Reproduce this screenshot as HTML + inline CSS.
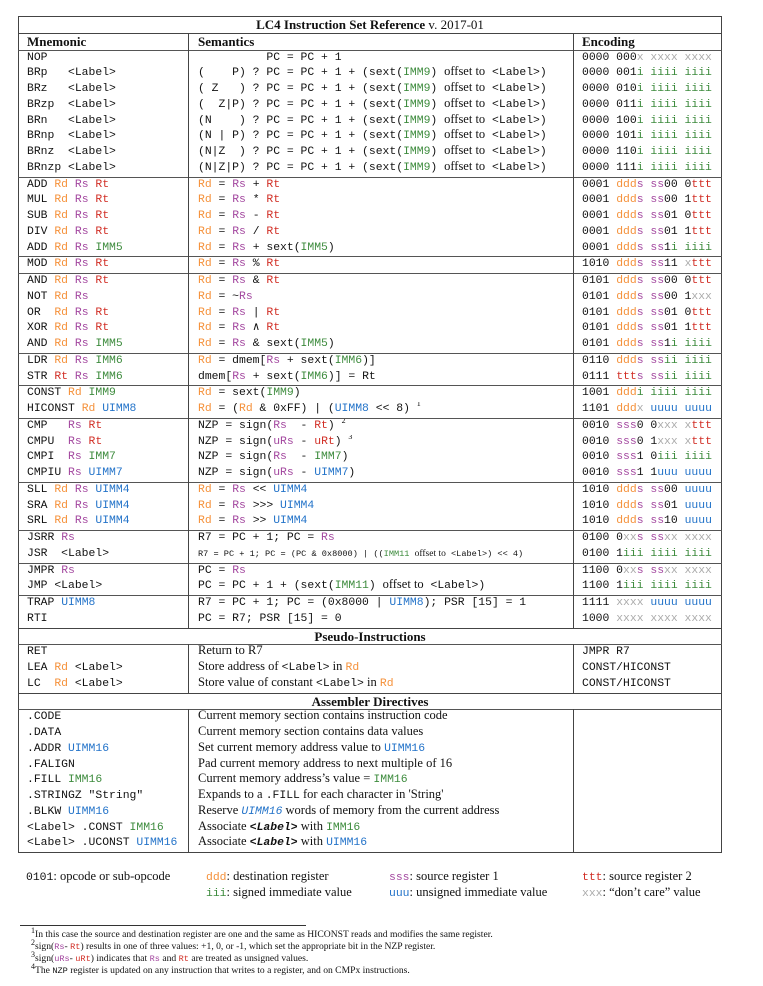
<!DOCTYPE html>
<html><head><meta charset="utf-8"><style>
body{margin:0;background:#fff;width:763px;height:986px;position:relative;overflow:hidden;color:#111;}
table{position:absolute;left:18px;top:16px;border-collapse:collapse;table-layout:fixed;border:1px solid #444;}
td{padding:0;height:15.75px;line-height:15.75px;font-family:"Liberation Mono",monospace;font-size:11.4px;white-space:pre;overflow:hidden;vertical-align:middle;}
td>div{height:15.75px;overflow:hidden;}
td.c1{width:161px;padding-left:8px;border-right:1px solid #444;}
td.c2{width:375px;padding-left:9px;border-right:1px solid #444;}
td.c3{width:139px;padding-left:8px;}
tr.g td{border-top:1px solid #555;}
.h td{font-family:"Liberation Serif",serif;font-weight:bold;font-size:13px;border-top:1px solid #444;}
.t td{font-family:"Liberation Serif",serif;font-weight:bold;font-size:13px;text-align:center;border-top:1px solid #444;}
.sf{font-family:"Liberation Serif",serif;font-size:12.5px;line-height:0;}
i,b{line-height:0;}
.d{color:#f5913a}.s{color:#a3479f}.t1{color:#d12e25}.i{color:#3d8b3d}.u{color:#2373c9}.x{color:#aaa}
sup{font-family:"Liberation Serif",serif;font-size:8px;line-height:0;}
.sm{font-size:8.6px;line-height:0;}
.leg{position:absolute;font-family:"Liberation Serif",serif;font-size:12.5px;white-space:pre;line-height:16px;}
.leg span.m{font-family:"Liberation Mono",monospace;font-size:11.4px;}
.fn{position:absolute;left:31px;font-family:"Liberation Serif",serif;font-size:9.6px;white-space:pre;line-height:12px;}
.fn .m{font-family:"Liberation Mono",monospace;font-size:8.6px;}
</style></head><body>
<table>
<tr class="t"><td colspan="3"><div>LC4 Instruction Set Reference <span style="font-weight:normal">v. 2017-01</span></div></td></tr>
<tr class="h"><td class="c1"><div>Mnemonic</div></td><td class="c2"><div>Semantics</div></td><td class="c3"><div>Encoding</div></td></tr>
<tr class="g"><td class="c1"><div>NOP</div></td><td class="c2"><div>          PC = PC + 1</div></td><td class="c3"><div>0000 000<span class="x">x xxxx xxxx</span></div></td></tr>
<tr><td class="c1"><div>BRp   &lt;Label&gt;</div></td><td class="c2"><div>(    P) ? PC = PC + 1 + (sext(<span class="i">IMM9</span>) <span class="sf">offset to</span> &lt;Label&gt;)</div></td><td class="c3"><div>0000 001<span class="i">i iiii iiii</span></div></td></tr>
<tr><td class="c1"><div>BRz   &lt;Label&gt;</div></td><td class="c2"><div>( Z   ) ? PC = PC + 1 + (sext(<span class="i">IMM9</span>) <span class="sf">offset to</span> &lt;Label&gt;)</div></td><td class="c3"><div>0000 010<span class="i">i iiii iiii</span></div></td></tr>
<tr><td class="c1"><div>BRzp  &lt;Label&gt;</div></td><td class="c2"><div>(  Z|P) ? PC = PC + 1 + (sext(<span class="i">IMM9</span>) <span class="sf">offset to</span> &lt;Label&gt;)</div></td><td class="c3"><div>0000 011<span class="i">i iiii iiii</span></div></td></tr>
<tr><td class="c1"><div>BRn   &lt;Label&gt;</div></td><td class="c2"><div>(N    ) ? PC = PC + 1 + (sext(<span class="i">IMM9</span>) <span class="sf">offset to</span> &lt;Label&gt;)</div></td><td class="c3"><div>0000 100<span class="i">i iiii iiii</span></div></td></tr>
<tr><td class="c1"><div>BRnp  &lt;Label&gt;</div></td><td class="c2"><div>(N | P) ? PC = PC + 1 + (sext(<span class="i">IMM9</span>) <span class="sf">offset to</span> &lt;Label&gt;)</div></td><td class="c3"><div>0000 101<span class="i">i iiii iiii</span></div></td></tr>
<tr><td class="c1"><div>BRnz  &lt;Label&gt;</div></td><td class="c2"><div>(N|Z  ) ? PC = PC + 1 + (sext(<span class="i">IMM9</span>) <span class="sf">offset to</span> &lt;Label&gt;)</div></td><td class="c3"><div>0000 110<span class="i">i iiii iiii</span></div></td></tr>
<tr><td class="c1"><div>BRnzp &lt;Label&gt;</div></td><td class="c2"><div>(N|Z|P) ? PC = PC + 1 + (sext(<span class="i">IMM9</span>) <span class="sf">offset to</span> &lt;Label&gt;)</div></td><td class="c3"><div>0000 111<span class="i">i iiii iiii</span></div></td></tr>

<tr class="g"><td class="c1"><div>ADD <span class="d">Rd</span> <span class="s">Rs</span> <span class="t1">Rt</span></div></td><td class="c2"><div><span class="d">Rd</span> = <span class="s">Rs</span> + <span class="t1">Rt</span></div></td><td class="c3"><div>0001 <span class="d">ddd</span><span class="s">s ss</span>00 0<span class="t1">ttt</span></div></td></tr>
<tr><td class="c1"><div>MUL <span class="d">Rd</span> <span class="s">Rs</span> <span class="t1">Rt</span></div></td><td class="c2"><div><span class="d">Rd</span> = <span class="s">Rs</span> * <span class="t1">Rt</span></div></td><td class="c3"><div>0001 <span class="d">ddd</span><span class="s">s ss</span>00 1<span class="t1">ttt</span></div></td></tr>
<tr><td class="c1"><div>SUB <span class="d">Rd</span> <span class="s">Rs</span> <span class="t1">Rt</span></div></td><td class="c2"><div><span class="d">Rd</span> = <span class="s">Rs</span> - <span class="t1">Rt</span></div></td><td class="c3"><div>0001 <span class="d">ddd</span><span class="s">s ss</span>01 0<span class="t1">ttt</span></div></td></tr>
<tr><td class="c1"><div>DIV <span class="d">Rd</span> <span class="s">Rs</span> <span class="t1">Rt</span></div></td><td class="c2"><div><span class="d">Rd</span> = <span class="s">Rs</span> / <span class="t1">Rt</span></div></td><td class="c3"><div>0001 <span class="d">ddd</span><span class="s">s ss</span>01 1<span class="t1">ttt</span></div></td></tr>
<tr><td class="c1"><div>ADD <span class="d">Rd</span> <span class="s">Rs</span> <span class="i">IMM5</span></div></td><td class="c2"><div><span class="d">Rd</span> = <span class="s">Rs</span> + sext(<span class="i">IMM5</span>)</div></td><td class="c3"><div>0001 <span class="d">ddd</span><span class="s">s ss</span>1<span class="i">i iiii</span></div></td></tr>

<tr class="g"><td class="c1"><div>MOD <span class="d">Rd</span> <span class="s">Rs</span> <span class="t1">Rt</span></div></td><td class="c2"><div><span class="d">Rd</span> = <span class="s">Rs</span> % <span class="t1">Rt</span></div></td><td class="c3"><div>1010 <span class="d">ddd</span><span class="s">s ss</span>11 <span class="x">x</span><span class="t1">ttt</span></div></td></tr>

<tr class="g"><td class="c1"><div>AND <span class="d">Rd</span> <span class="s">Rs</span> <span class="t1">Rt</span></div></td><td class="c2"><div><span class="d">Rd</span> = <span class="s">Rs</span> &amp; <span class="t1">Rt</span></div></td><td class="c3"><div>0101 <span class="d">ddd</span><span class="s">s ss</span>00 0<span class="t1">ttt</span></div></td></tr>
<tr><td class="c1"><div>NOT <span class="d">Rd</span> <span class="s">Rs</span></div></td><td class="c2"><div><span class="d">Rd</span> = ~<span class="s">Rs</span></div></td><td class="c3"><div>0101 <span class="d">ddd</span><span class="s">s ss</span>00 1<span class="x">xxx</span></div></td></tr>
<tr><td class="c1"><div>OR  <span class="d">Rd</span> <span class="s">Rs</span> <span class="t1">Rt</span></div></td><td class="c2"><div><span class="d">Rd</span> = <span class="s">Rs</span> | <span class="t1">Rt</span></div></td><td class="c3"><div>0101 <span class="d">ddd</span><span class="s">s ss</span>01 0<span class="t1">ttt</span></div></td></tr>
<tr><td class="c1"><div>XOR <span class="d">Rd</span> <span class="s">Rs</span> <span class="t1">Rt</span></div></td><td class="c2"><div><span class="d">Rd</span> = <span class="s">Rs</span> ∧ <span class="t1">Rt</span></div></td><td class="c3"><div>0101 <span class="d">ddd</span><span class="s">s ss</span>01 1<span class="t1">ttt</span></div></td></tr>
<tr><td class="c1"><div>AND <span class="d">Rd</span> <span class="s">Rs</span> <span class="i">IMM5</span></div></td><td class="c2"><div><span class="d">Rd</span> = <span class="s">Rs</span> &amp; sext(<span class="i">IMM5</span>)</div></td><td class="c3"><div>0101 <span class="d">ddd</span><span class="s">s ss</span>1<span class="i">i iiii</span></div></td></tr>

<tr class="g"><td class="c1"><div>LDR <span class="d">Rd</span> <span class="s">Rs</span> <span class="i">IMM6</span></div></td><td class="c2"><div><span class="d">Rd</span> = dmem[<span class="s">Rs</span> + sext(<span class="i">IMM6</span>)]</div></td><td class="c3"><div>0110 <span class="d">ddd</span><span class="s">s ss</span><span class="i">ii iiii</span></div></td></tr>
<tr><td class="c1"><div>STR <span class="t1">Rt</span> <span class="s">Rs</span> <span class="i">IMM6</span></div></td><td class="c2"><div>dmem[<span class="s">Rs</span> + sext(<span class="i">IMM6</span>)] = Rt</div></td><td class="c3"><div>0111 <span class="t1">ttt</span><span class="s">s ss</span><span class="i">ii iiii</span></div></td></tr>

<tr class="g"><td class="c1"><div>CONST <span class="d">Rd</span> <span class="i">IMM9</span></div></td><td class="c2"><div><span class="d">Rd</span> = sext(<span class="i">IMM9</span>)</div></td><td class="c3"><div>1001 <span class="d">ddd</span><span class="i">i iiii iiii</span></div></td></tr>
<tr><td class="c1"><div>HICONST <span class="d">Rd</span> <span class="u">UIMM8</span></div></td><td class="c2"><div><span class="d">Rd</span> = (<span class="d">Rd</span> &amp; 0xFF) | (<span class="u">UIMM8</span> &lt;&lt; 8) <sup>1</sup></div></td><td class="c3"><div>1101 <span class="d">ddd</span><span class="x">x</span> <span class="u">uuuu uuuu</span></div></td></tr>

<tr class="g"><td class="c1"><div>CMP   <span class="s">Rs</span> <span class="t1">Rt</span></div></td><td class="c2"><div>NZP = sign(<span class="s">Rs</span>  - <span class="t1">Rt</span>) <sup>2</sup></div></td><td class="c3"><div>0010 <span class="s">sss</span>0 0<span class="x">xxx x</span><span class="t1">ttt</span></div></td></tr>
<tr><td class="c1"><div>CMPU  <span class="s">Rs</span> <span class="t1">Rt</span></div></td><td class="c2"><div>NZP = sign(<span class="s">uRs</span> - <span class="t1">uRt</span>) <sup>3</sup></div></td><td class="c3"><div>0010 <span class="s">sss</span>0 1<span class="x">xxx x</span><span class="t1">ttt</span></div></td></tr>
<tr><td class="c1"><div>CMPI  <span class="s">Rs</span> <span class="i">IMM7</span></div></td><td class="c2"><div>NZP = sign(<span class="s">Rs</span>  - <span class="i">IMM7</span>)</div></td><td class="c3"><div>0010 <span class="s">sss</span>1 0<span class="i">iii iiii</span></div></td></tr>
<tr><td class="c1"><div>CMPIU <span class="s">Rs</span> <span class="u">UIMM7</span></div></td><td class="c2"><div>NZP = sign(<span class="s">uRs</span> - <span class="u">UIMM7</span>)</div></td><td class="c3"><div>0010 <span class="s">sss</span>1 1<span class="u">uuu uuuu</span></div></td></tr>

<tr class="g"><td class="c1"><div>SLL <span class="d">Rd</span> <span class="s">Rs</span> <span class="u">UIMM4</span></div></td><td class="c2"><div><span class="d">Rd</span> = <span class="s">Rs</span> &lt;&lt; <span class="u">UIMM4</span></div></td><td class="c3"><div>1010 <span class="d">ddd</span><span class="s">s ss</span>00 <span class="u">uuuu</span></div></td></tr>
<tr><td class="c1"><div>SRA <span class="d">Rd</span> <span class="s">Rs</span> <span class="u">UIMM4</span></div></td><td class="c2"><div><span class="d">Rd</span> = <span class="s">Rs</span> &gt;&gt;&gt; <span class="u">UIMM4</span></div></td><td class="c3"><div>1010 <span class="d">ddd</span><span class="s">s ss</span>01 <span class="u">uuuu</span></div></td></tr>
<tr><td class="c1"><div>SRL <span class="d">Rd</span> <span class="s">Rs</span> <span class="u">UIMM4</span></div></td><td class="c2"><div><span class="d">Rd</span> = <span class="s">Rs</span> &gt;&gt; <span class="u">UIMM4</span></div></td><td class="c3"><div>1010 <span class="d">ddd</span><span class="s">s ss</span>10 <span class="u">uuuu</span></div></td></tr>

<tr class="g"><td class="c1"><div>JSRR <span class="s">Rs</span></div></td><td class="c2"><div>R7 = PC + 1; PC = <span class="s">Rs</span></div></td><td class="c3"><div>0100 0<span class="x">xx</span><span class="s">s ss</span><span class="x">xx xxxx</span></div></td></tr>
<tr><td class="c1"><div>JSR  &lt;Label&gt;</div></td><td class="c2"><div><span class="sm">R7 = PC + 1; PC = (PC &amp; 0x8000) | ((<span class="i">IMM11</span> <span class="sf" style="font-size:9.5px">offset to</span> &lt;Label&gt;) &lt;&lt; 4)</span></div></td><td class="c3"><div>0100 1<span class="i">iii iiii iiii</span></div></td></tr>

<tr class="g"><td class="c1"><div>JMPR <span class="s">Rs</span></div></td><td class="c2"><div>PC = <span class="s">Rs</span></div></td><td class="c3"><div>1100 0<span class="x">xx</span><span class="s">s ss</span><span class="x">xx xxxx</span></div></td></tr>
<tr><td class="c1"><div>JMP &lt;Label&gt;</div></td><td class="c2"><div>PC = PC + 1 + (sext(<span class="i">IMM11</span>) <span class="sf">offset to</span> &lt;Label&gt;)</div></td><td class="c3"><div>1100 1<span class="i">iii iiii iiii</span></div></td></tr>

<tr class="g"><td class="c1"><div>TRAP <span class="u">UIMM8</span></div></td><td class="c2"><div>R7 = PC + 1; PC = (0x8000 | <span class="u">UIMM8</span>); PSR [15] = 1</div></td><td class="c3"><div>1111 <span class="x">xxxx</span> <span class="u">uuuu uuuu</span></div></td></tr>
<tr><td class="c1"><div>RTI</div></td><td class="c2"><div>PC = R7; PSR [15] = 0</div></td><td class="c3"><div>1000 <span class="x">xxxx xxxx xxxx</span></div></td></tr>

<tr class="t"><td colspan="3"><div>Pseudo-Instructions</div></td></tr>
<tr class="g"><td class="c1"><div>RET</div></td><td class="c2"><div><span class="sf">Return to R7</span></div></td><td class="c3"><div>JMPR R7</div></td></tr>
<tr><td class="c1"><div>LEA <span class="d">Rd</span> &lt;Label&gt;</div></td><td class="c2"><div><span class="sf">Store address of </span>&lt;Label&gt;<span class="sf"> in </span><span class="d">Rd</span></div></td><td class="c3"><div>CONST/HICONST</div></td></tr>
<tr><td class="c1"><div>LC  <span class="d">Rd</span> &lt;Label&gt;</div></td><td class="c2"><div><span class="sf">Store value of constant </span>&lt;Label&gt;<span class="sf"> in </span><span class="d">Rd</span></div></td><td class="c3"><div>CONST/HICONST</div></td></tr>

<tr class="t"><td colspan="3"><div>Assembler Directives</div></td></tr>
<tr class="g"><td class="c1"><div>.CODE</div></td><td class="c2"><div><span class="sf">Current memory section contains instruction code</span></div></td><td class="c3"><div></div></td></tr>
<tr><td class="c1"><div>.DATA</div></td><td class="c2"><div><span class="sf">Current memory section contains data values</span></div></td><td class="c3"><div></div></td></tr>
<tr><td class="c1"><div>.ADDR <span class="u">UIMM16</span></div></td><td class="c2"><div><span class="sf">Set current memory address value to </span><span class="u">UIMM16</span></div></td><td class="c3"><div></div></td></tr>
<tr><td class="c1"><div>.FALIGN</div></td><td class="c2"><div><span class="sf">Pad current memory address to next multiple of 16</span></div></td><td class="c3"><div></div></td></tr>
<tr><td class="c1"><div>.FILL <span class="i">IMM16</span></div></td><td class="c2"><div><span class="sf">Current memory address’s value = </span><span class="i">IMM16</span></div></td><td class="c3"><div></div></td></tr>
<tr><td class="c1"><div>.STRINGZ "String"</div></td><td class="c2"><div><span class="sf">Expands to a </span>.FILL<span class="sf"> for each character in 'String'</span></div></td><td class="c3"><div></div></td></tr>
<tr><td class="c1"><div>.BLKW <span class="u">UIMM16</span></div></td><td class="c2"><div><span class="sf">Reserve </span><span class="u"><i>UIMM16</i></span><span class="sf"> words of memory from the current address</span></div></td><td class="c3"><div></div></td></tr>
<tr><td class="c1"><div>&lt;Label&gt; .CONST <span class="i">IMM16</span></div></td><td class="c2"><div><span class="sf">Associate </span><b><i>&lt;Label&gt;</i></b><span class="sf"> with </span><span class="i">IMM16</span></div></td><td class="c3"><div></div></td></tr>
<tr><td class="c1"><div>&lt;Label&gt; .UCONST <span class="u">UIMM16</span></div></td><td class="c2"><div><span class="sf">Associate </span><b><i>&lt;Label&gt;</i></b><span class="sf"> with </span><span class="u">UIMM16</span></div></td><td class="c3"><div></div></td></tr>
</table>

<div class="leg" style="left:26px;top:868px"><span class="m">0101</span>: opcode or sub-opcode</div>
<div class="leg" style="left:206px;top:868px"><span class="m d">ddd</span>: destination register</div>
<div class="leg" style="left:389px;top:868px"><span class="m s">sss</span>: source register 1</div>
<div class="leg" style="left:582px;top:868px"><span class="m t1">ttt</span>: source register 2</div>
<div class="leg" style="left:206px;top:884px"><span class="m i">iii</span>: signed immediate value</div>
<div class="leg" style="left:389px;top:884px"><span class="m u">uuu</span>: unsigned immediate value</div>
<div class="leg" style="left:582px;top:884px"><span class="m x">xxx</span>: “don’t care” value</div>

<div style="position:absolute;left:20px;top:925px;width:286px;height:1px;background:#333"></div>
<div class="fn" style="top:929px"><sup>1</sup>In this case the source and destination register are one and the same as HICONST reads and modifies the same register.</div>
<div class="fn" style="top:941px"><sup>2</sup>sign(<span class="m s">Rs</span>- <span class="m t1">Rt</span>) results in one of three values: +1, 0, or -1, which set the appropriate bit in the NZP register.</div>
<div class="fn" style="top:953px"><sup>3</sup>sign(<span class="m s">uRs</span>- <span class="m t1">uRt</span>) indicates that <span class="m s">Rs</span> and <span class="m t1">Rt</span> are treated as unsigned values.</div>
<div class="fn" style="top:965px"><sup>4</sup>The <span class="m">NZP</span> register is updated on any instruction that writes to a register, and on CMPx instructions.</div>
</body></html>
